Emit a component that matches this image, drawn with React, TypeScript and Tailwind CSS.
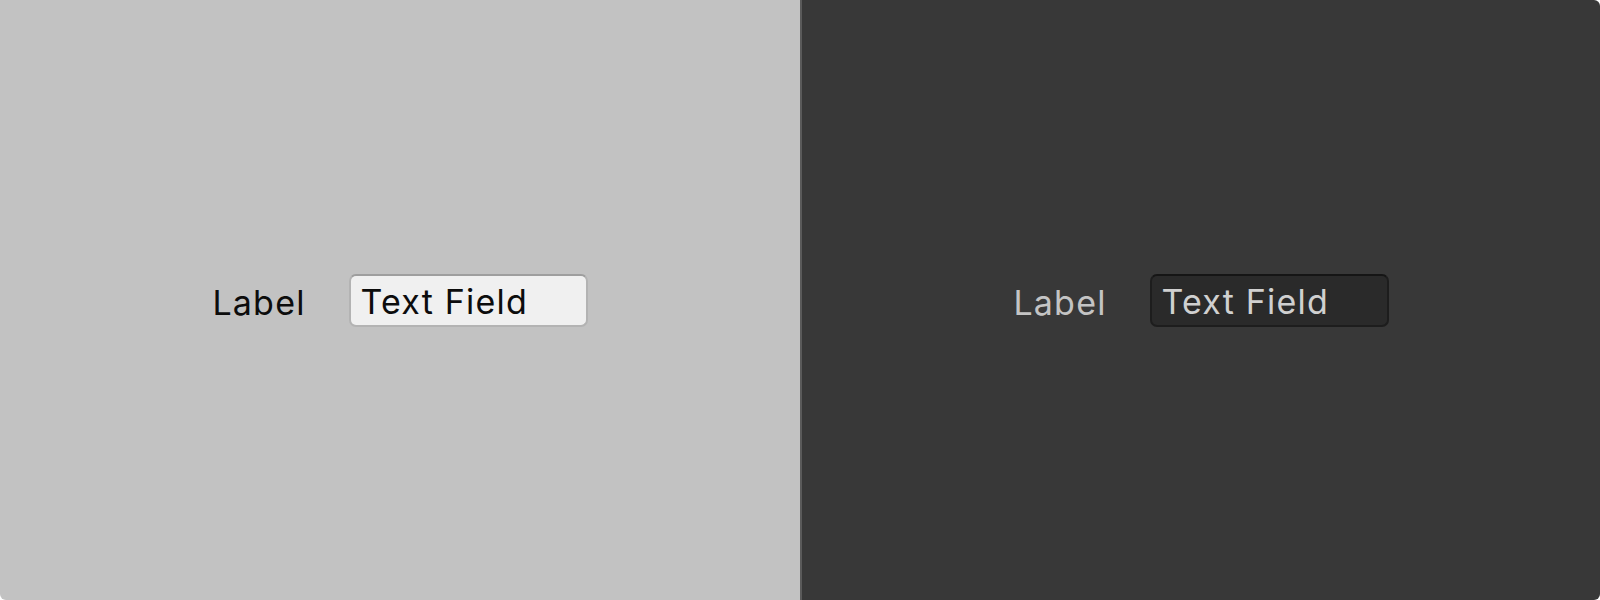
import React from 'react';

type Theme = 'light' | 'dark';

const FieldRow: React.FC<{ theme: Theme }> = ({ theme }) => {
  const dark = theme === 'dark';
  return (
    <div className="flex items-center gap-[43px] pt-[1px]">
      <span
        className={`text-[34px] leading-none tracking-[1.2px] pt-[5px] ${
          dark ? 'text-[#c4c4c4]' : 'text-[#0c0c0c]'
        }`}
      >
        Label
      </span>
      <div
        className={`flex items-center w-[239px] h-[53px] rounded-[7px] border-2 pl-[10px] ${
          dark
            ? 'bg-[#2a2a2a] border-[#1d1d1d] border-t-[#151515] text-[#d0d0d0]'
            : 'bg-[#f0f0f0] border-[#b3b3b3] border-t-[#9e9e9e] text-[#0c0c0c]'
        }`}
      >
        <span className="text-[34px] leading-none tracking-[1.2px] pt-[3px]">Text Field</span>
      </div>
    </div>
  );
};

export default function App() {
  return (
    <div className="flex w-[1600px] h-[600px] bg-white font-['Inter','Liberation_Sans',sans-serif]">
      <div className="flex w-[800px] h-full items-center justify-center bg-[#c2c2c2] rounded-bl-[6px]">
        <FieldRow theme="light" />
      </div>
      <div className="flex w-[800px] h-full items-center justify-center bg-[#383838] border-l-2 border-[#5a5a5a] rounded-tr-[6px] rounded-br-[6px]">
        <FieldRow theme="dark" />
      </div>
    </div>
  );
}
